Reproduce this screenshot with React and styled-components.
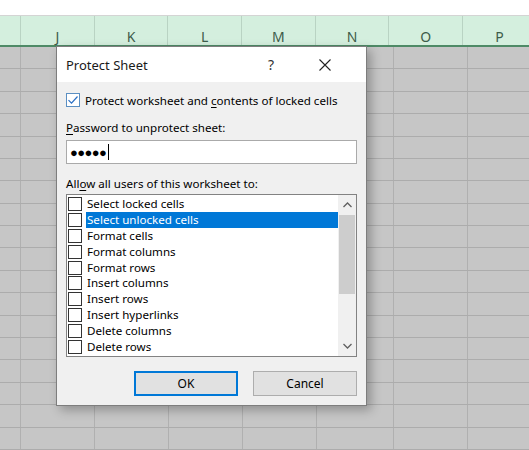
import React from 'react';
import styled, { createGlobalStyle } from 'styled-components';

const GlobalStyle = createGlobalStyle`
  html, body {
    margin: 0;
    padding: 0;
    background: #ffffff;
  }
  body {
    font-family: "Noto Sans", "Open Sans", sans-serif;
    overflow: hidden;
  }
`;

const Page = styled.div`
  position: relative;
  width: 529px;
  height: 450px;
  overflow: hidden;
  display: flex;
  flex-direction: column;
`;

const TopStrip = styled.div`
  height: 17px;
  background: #ffffff;
  border-bottom: 1px solid #d4d4d4;
`;

const HeaderRow = styled.div`
  display: grid;
  grid-template-columns: 21px repeat(7, 73.7px) 1fr;
  height: 31px;
  background: #d4efde;
  border-bottom: 2px solid #4e8a66;
`;

const HeaderCell = styled.div`
  display: flex;
  align-items: flex-start;
  justify-content: center;
  border-right: 1px solid #b9d3c3;
  color: #3d5c4a;
  font-size: 14px;
  line-height: 16px;
  padding-top: 13px;
  box-sizing: border-box;
`;

const Sheet = styled.div`
  flex: 1;
  background: #c6c6c6;
  display: flex;
  flex-direction: column;
`;

const SheetRow = styled.div`
  display: grid;
  grid-template-columns: 21px 74px 74px 74px 74px 77px 74px 74px 1fr;
  height: 22.4px;
  box-sizing: border-box;
  border-bottom: 1px solid #acacac;
  flex-shrink: 0;
`;

const SheetCell = styled.div`
  border-right: 1px solid #b0b0b0;
`;

const Dialog = styled.div`
  position: absolute;
  left: 56px;
  top: 46px;
  width: 311px;
  height: 360px;
  box-sizing: border-box;
  border: 1px solid #7d7d7d;
  background: #f0f0f0;
  box-shadow: 4px 4px 10px rgba(0, 0, 0, 0.28);
  display: flex;
  flex-direction: column;
  color: #000;
  font-size: 11.6px;
`;

const TitleBar = styled.div`
  height: 35px;
  background: #ffffff;
  display: flex;
  align-items: center;
  padding-left: 9px;
`;

const Title = styled.div`
  flex: 1;
  font-size: 13px;
  color: #1a1a1a;
`;

const TitleButton = styled.div`
  width: ${p => p.w}px;
  display: flex;
  align-items: center;
  justify-content: center;
  font-size: 14px;
  color: #333;
`;

const Body = styled.div`
  flex: 1;
  display: flex;
  flex-direction: column;
  padding: 10px 9px 9px 9px;
`;

const CheckRow = styled.label`
  display: flex;
  align-items: center;
  gap: 5px;
  height: 16px;
`;

const Label = styled.div`
  margin-top: ${p => p.mt}px;
  height: 16px;
  line-height: 16px;
`;

const U = styled.span`
  text-decoration: underline;
  text-underline-offset: 2px;
`;

const PasswordInput = styled.div`
  margin-top: 4px;
  height: 24px;
  box-sizing: border-box;
  border: 1px solid #aaaaaa;
  background: #ffffff;
  display: flex;
  align-items: center;
  padding-left: 3px;
  font-size: 13px;
  letter-spacing: -0.6px;
`;

const Caret = styled.span`
  display: inline-block;
  width: 1px;
  height: 16px;
  background: #000;
  margin-left: 2px;
`;

const ListBox = styled.div`
  margin-top: 2px;
  height: 163px;
  box-sizing: border-box;
  border: 1px solid #828282;
  background: #ffffff;
  display: flex;
`;

const Items = styled.div`
  flex: 1;
  padding-top: 1px;
  padding-left: 1px;
`;

const Item = styled.div`
  display: flex;
  align-items: center;
  height: 15.9px;
`;

const Box = styled.div`
  width: 14px;
  height: 14px;
  box-sizing: border-box;
  border: 1px solid #333;
  background: #fff;
  margin-right: 4px;
  flex-shrink: 0;
`;

const ItemText = styled.div`
  flex: 1;
  height: 16px;
  line-height: 16px;
  padding-left: 1px;
  background: ${p => (p.selected ? '#0078d7' : 'transparent')};
  color: ${p => (p.selected ? '#ffffff' : '#000')};
`;

const ScrollBar = styled.div`
  width: 18px;
  background: #f0f0f0;
  display: flex;
  flex-direction: column;
`;

const Arrow = styled.div`
  height: 20px;
  display: flex;
  align-items: center;
  justify-content: center;
`;

const Thumb = styled.div`
  height: 79px;
  background: #cdcdcd;
  margin: 0 1px;
`;

const Track = styled.div`
  flex: 1;
`;

const Buttons = styled.div`
  margin-top: auto;
  display: flex;
  justify-content: flex-end;
  gap: 15px;
`;

const Button = styled.div`
  width: 104px;
  height: 25px;
  box-sizing: border-box;
  border: ${p => (p.primary ? '2px solid #0078d7' : '1px solid #adadad')};
  background: #e1e1e1;
  display: flex;
  align-items: center;
  justify-content: center;
  font-size: 12px;
`;

const columns = ['', 'J', 'K', 'L', 'M', 'N', 'O', 'P', ''];

const permissions = [
  'Select locked cells',
  'Select unlocked cells',
  'Format cells',
  'Format columns',
  'Format rows',
  'Insert columns',
  'Insert rows',
  'Insert hyperlinks',
  'Delete columns',
  'Delete rows',
];

const CheckedBox = () => (
  <svg width="14" height="14" viewBox="0 0 14 14">
    <rect x="0.5" y="0.5" width="13" height="13" fill="#fff" stroke="#5b8fc2" />
    <path d="M2.5 7.2 L5.5 10.2 L11.5 3.5" fill="none" stroke="#2a6fc4" strokeWidth="1.2" />
  </svg>
);

const Chevron = ({ up }) => (
  <svg width="9" height="6" viewBox="0 0 9 6">
    <path
      d={up ? 'M0.5 5 L4.5 1 L8.5 5' : 'M0.5 1 L4.5 5 L8.5 1'}
      fill="none"
      stroke="#606060"
      strokeWidth="1.3"
    />
  </svg>
);

const CloseIcon = () => (
  <svg width="12" height="12" viewBox="0 0 12 12">
    <path d="M0.5 0.5 L11.5 11.5 M11.5 0.5 L0.5 11.5" stroke="#222" strokeWidth="1.1" />
  </svg>
);

export default function App() {
  const rows = Array.from({ length: 18 });
  return (
    <Page>
      <GlobalStyle />
      <TopStrip />
      <HeaderRow>
        {columns.map((c, i) => (
          <HeaderCell key={i}>{c}</HeaderCell>
        ))}
      </HeaderRow>
      <Sheet>
        {rows.map((_, r) => (
          <SheetRow key={r}>
            {columns.map((_, i) => (
              <SheetCell key={i} />
            ))}
          </SheetRow>
        ))}
      </Sheet>

      <Dialog>
        <TitleBar>
          <Title>Protect Sheet</Title>
          <TitleButton w={26}>?</TitleButton>
          <TitleButton w={82}>
            <CloseIcon />
          </TitleButton>
        </TitleBar>
        <Body>
          <CheckRow>
            <CheckedBox />
            <span>
              Protect worksheet and <U>c</U>ontents of locked cells
            </span>
          </CheckRow>
          <Label mt={12}>
            <U>P</U>assword to unprotect sheet:
          </Label>
          <PasswordInput>
            ●●●●●
            <Caret />
          </PasswordInput>
          <Label mt={12}>
            All<U>o</U>w all users of this worksheet to:
          </Label>
          <ListBox>
            <Items>
              {permissions.map((p, i) => (
                <Item key={p}>
                  <Box />
                  <ItemText selected={i === 1}>{p}</ItemText>
                </Item>
              ))}
            </Items>
            <ScrollBar>
              <Arrow>
                <Chevron up />
              </Arrow>
              <Thumb />
              <Track />
              <Arrow>
                <Chevron />
              </Arrow>
            </ScrollBar>
          </ListBox>
          <Buttons>
            <Button primary>OK</Button>
            <Button>Cancel</Button>
          </Buttons>
        </Body>
      </Dialog>
    </Page>
  );
}
